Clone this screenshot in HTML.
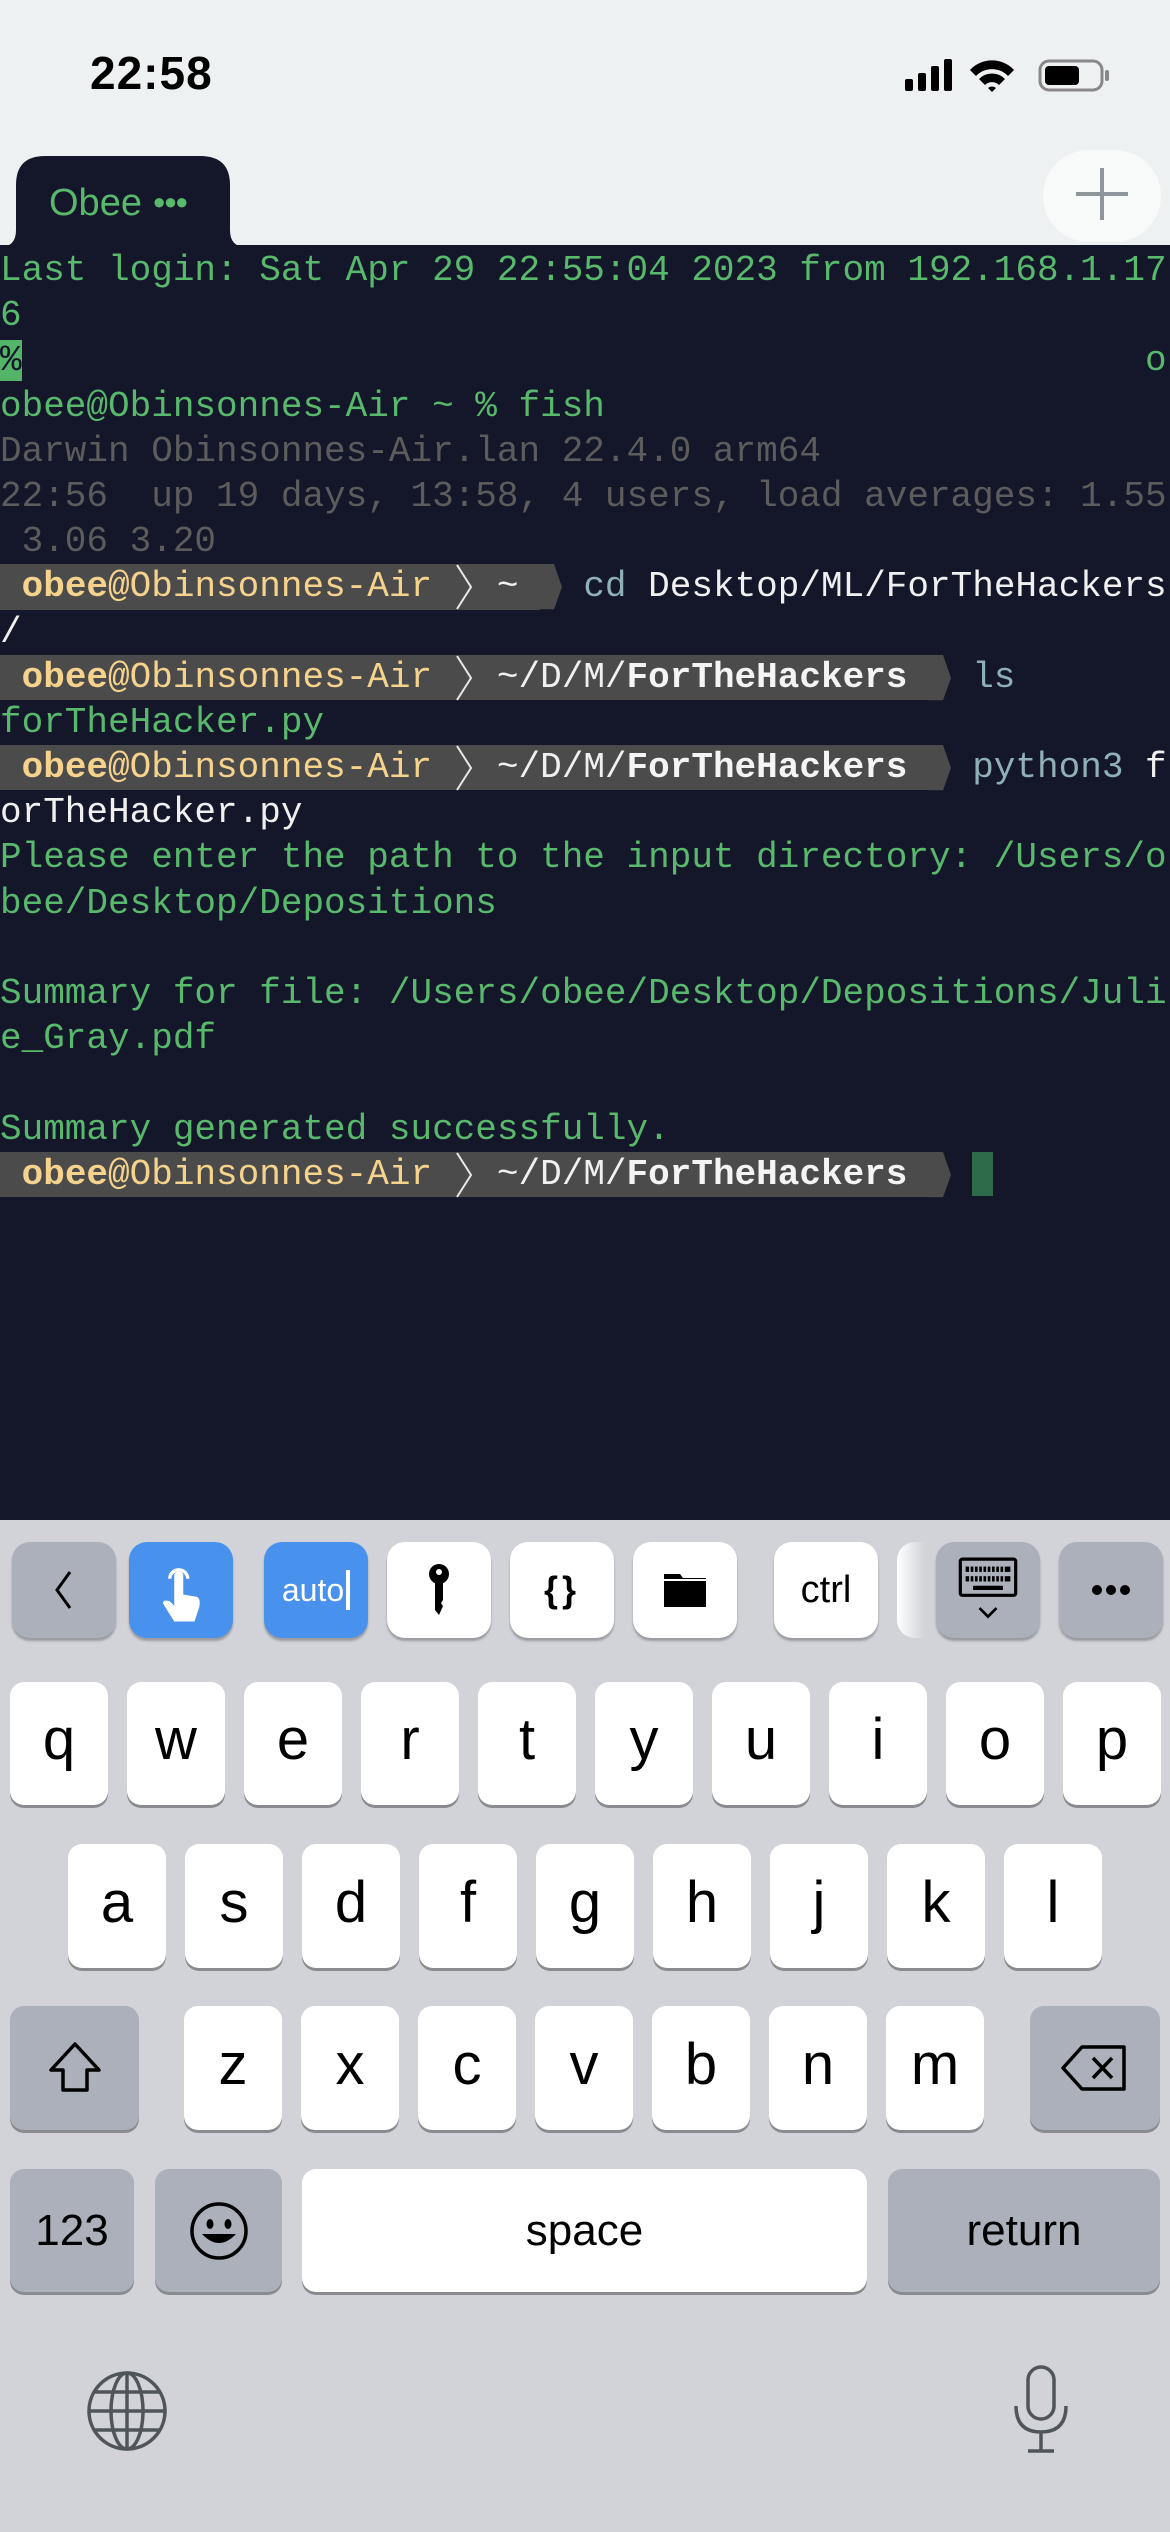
<!DOCTYPE html>
<html><head><meta charset="utf-8"><style>
*{margin:0;padding:0;box-sizing:border-box}
body{width:1170px;height:2532px;background:#d1d3d9;position:relative;overflow:hidden;font-family:"Liberation Sans",sans-serif}
.top{position:absolute;left:0;top:0;width:1170px;height:245px;background:#eef1f2}
.time{position:absolute;left:90px;top:46px;font-size:46px;font-weight:bold;color:#000;letter-spacing:1px}
.term{position:absolute;left:0;top:245px;width:1170px;height:1275px;background:#14162a;overflow:hidden}
.lines{position:absolute;left:0;top:3px;font-family:"Liberation Mono",monospace;font-size:36px;line-height:45.2px;color:#58b86b}
.l{height:45.2px;position:relative;white-space:pre}
.g{color:#5c5c5c}
.seg{background:#4b4b4b;display:inline-block;height:45.2px;vertical-align:top}
.y{color:#f6d38c}
.yb{color:#f6d38c;font-weight:bold}
.w{color:#f0f0f0}
.wb{color:#f4f4f4;font-weight:bold}
.t{color:#8fb0b6}
.ch{display:inline-block;width:21.6px;height:45.2px;vertical-align:top;position:relative}
.ch svg{position:absolute;left:0;top:0}
.key{position:absolute;background:#fff;border-radius:14px;box-shadow:0 3px 0 #8a8b8f;display:flex;align-items:center;justify-content:center;font-size:58px;color:#000;padding-bottom:8px}
.gk{background:#abb0ba}
.tb{position:absolute;top:1542px;height:96px;width:104px;border-radius:18px;background:#fff;box-shadow:0 3px 2px #9a9ba0;display:flex;align-items:center;justify-content:center}
.bl{background:#4891ec}
.gr{background:#abb0ba}
</style></head><body>
<div class="top"></div>
<div class="time">22:58</div>
<svg style="position:absolute;left:905px;top:55px" width="210" height="40" viewBox="0 0 210 40">
<rect x="0" y="24" width="8" height="12" rx="2" fill="#000"/><rect x="13" y="18" width="8" height="18" rx="2" fill="#000"/><rect x="26" y="11" width="8" height="25" rx="2" fill="#000"/><rect x="39" y="4" width="8" height="32" rx="2" fill="#000"/>
<path d="M65 15 A30 30 0 0 1 109 15 L103 21 A22 22 0 0 0 71 21 Z" fill="#000"/><path d="M74 24 A18 18 0 0 1 100 24 L94 30 A10 10 0 0 0 80 30 Z" fill="#000"/><path d="M83 33 L87 37 L91 33 A6 6 0 0 0 83 33Z" fill="#000"/>
<rect x="135" y="6" width="62" height="29" rx="9" fill="none" stroke="#888" stroke-width="3"/><rect x="140" y="11" width="34" height="19" rx="4" fill="#000"/><rect x="200" y="15" width="4" height="11" rx="2" fill="#888"/>
</svg>
<svg style="position:absolute;left:0;top:150px" width="250" height="97" viewBox="0 0 250 97">
<path d="M0 97 Q16 97 16 80 L16 35 Q16 6 45 6 L200 6 Q230 6 230 35 L230 80 Q230 97 246 97 Z" fill="#14162a"/>
</svg>
<div style="position:absolute;left:49px;top:182px;font-size:38px;color:#58b86b">Obee <span style="font-size:22px;letter-spacing:-2px;position:relative;top:-6px">●●●</span></div>
<div style="position:absolute;left:1043px;top:150px;width:118px;height:92px;border-radius:46px;background:#f8f9f9"></div>
<svg style="position:absolute;left:1074px;top:166px" width="56" height="56"><path d="M28 2V54M2 28H54" stroke="#8f969b" stroke-width="4"/></svg>

<div class="term"><div class="lines">
<div class="l">Last login: Sat Apr 29 22:55:04 2023 from 192.168.1.17</div>
<div class="l">6</div>
<div class="l"><span style="background:#54b468;color:#14162a">%</span>                                                    o</div>
<div class="l">obee@Obinsonnes-Air ~ % fish</div>
<div class="l g">Darwin Obinsonnes-Air.lan 22.4.0 arm64</div>
<div class="l g">22:56  up 19 days, 13:58, 4 users, load averages: 1.55</div>
<div class="l g"> 3.06 3.20</div>
<div class="l"><span class="seg"> <span class="yb">obee</span><span class="y">@Obinsonnes-Air</span> <span class="ch"><svg width="22" height="46"><path d="M3 1 L17 23 L3 45" stroke="#e8e8e8" stroke-width="2" fill="none"/></svg></span> <span class="w">~</span> </span><span class="ch"><svg width="22" height="46"><path d="M0 0 L14 0 L22 23 L14 45.2 L0 45.2Z" fill="#4b4b4b"/></svg></span> <span class="t">cd</span> <span class="w">Desktop/ML/ForTheHackers</span></div>
<div class="l w">/</div>
<div class="l"><span class="seg"> <span class="yb">obee</span><span class="y">@Obinsonnes-Air</span> <span class="ch"><svg width="22" height="46"><path d="M3 1 L17 23 L3 45" stroke="#e8e8e8" stroke-width="2" fill="none"/></svg></span> <span class="w">~/D/M/</span><span class="wb">ForTheHackers</span> </span><span class="ch"><svg width="22" height="46"><path d="M0 0 L14 0 L22 23 L14 45.2 L0 45.2Z" fill="#4b4b4b"/></svg></span> <span class="t">ls</span></div>
<div class="l">forTheHacker.py</div>
<div class="l"><span class="seg"> <span class="yb">obee</span><span class="y">@Obinsonnes-Air</span> <span class="ch"><svg width="22" height="46"><path d="M3 1 L17 23 L3 45" stroke="#e8e8e8" stroke-width="2" fill="none"/></svg></span> <span class="w">~/D/M/</span><span class="wb">ForTheHackers</span> </span><span class="ch"><svg width="22" height="46"><path d="M0 0 L14 0 L22 23 L14 45.2 L0 45.2Z" fill="#4b4b4b"/></svg></span> <span class="t">python3</span> <span class="w">f</span></div>
<div class="l w">orTheHacker.py</div>
<div class="l">Please enter the path to the input directory: /Users/o</div>
<div class="l">bee/Desktop/Depositions</div>
<div class="l"> </div>
<div class="l">Summary for file: /Users/obee/Desktop/Depositions/Juli</div>
<div class="l">e_Gray.pdf</div>
<div class="l"> </div>
<div class="l">Summary generated successfully.</div>
<div class="l"><span class="seg"> <span class="yb">obee</span><span class="y">@Obinsonnes-Air</span> <span class="ch"><svg width="22" height="46"><path d="M3 1 L17 23 L3 45" stroke="#e8e8e8" stroke-width="2" fill="none"/></svg></span> <span class="w">~/D/M/</span><span class="wb">ForTheHackers</span> </span><span class="ch"><svg width="22" height="46"><path d="M0 0 L14 0 L22 23 L14 45.2 L0 45.2Z" fill="#4b4b4b"/></svg></span> <span style="display:inline-block;width:21px;height:44px;background:#2e6b4b;vertical-align:top"></span></div>
</div></div>

<div class="tb gr" style="left:12px"><svg width="30" height="44"><path d="M21 4L8 22L21 40" stroke="#000" stroke-width="3" fill="none"/></svg></div>
<div class="tb bl" style="left:129px"><svg width="50" height="72" viewBox="0 0 44 64"><path d="M12 22 A8 8 0 1 1 28 22" stroke="#fff" stroke-width="3" fill="none"/><path d="M16 18 Q20 12 24 18 L24 36 L36 38 Q40 40 38 48 L34 60 L16 60 L6 44 Q6 40 12 42 L16 46Z" fill="#fff"/></svg></div>
<div class="tb bl" style="left:264px;color:#fff;font-size:32px">auto<span style="display:inline-block;width:4px;height:40px;background:#fff;margin-left:2px"></span></div>
<div class="tb" style="left:387px"><svg width="30" height="64" viewBox="0 0 30 60"><circle cx="15" cy="14" r="10" fill="#000"/><circle cx="15" cy="12" r="3" fill="#fff"/><path d="M11 22H19V40L17 43L19 46L15 55L11 50Z" fill="#000"/></svg></div>
<div class="tb" style="left:510px;font-size:36px;font-weight:bold;letter-spacing:4px">{}</div>
<div class="tb" style="left:633px"><svg width="44" height="36"><path d="M1 2H17L20 6H43V35H1Z" fill="#000"/><path d="M1 8H43" stroke="#fff" stroke-width="2"/></svg></div>
<div class="tb" style="left:774px;font-size:38px">ctrl</div>
<div class="tb" style="left:897px;width:28px;border-radius:18px 0 0 18px;background:linear-gradient(90deg,#fff,#d1d3d9);box-shadow:none"></div>
<div class="tb gr" style="left:936px"><svg width="60" height="66" viewBox="0 0 56 62"><rect x="2" y="2" width="52" height="34" rx="2" fill="none" stroke="#000" stroke-width="3"/><g fill="#000"><rect x="7" y="9" width="42" height="5"/><rect x="7" y="18" width="42" height="5"/><rect x="14" y="27" width="28" height="4"/></g><g stroke="#abb0ba" stroke-width="1.5"><path d="M11 8V24M15 8V24M19 8V24M23 8V24M27 8V24M31 8V24M35 8V24M39 8V24M43 8V24"/></g><path d="M20 48L28 56L36 48" stroke="#000" stroke-width="2.5" fill="none"/></svg></div>
<div class="tb gr" style="left:1059px"><svg width="40" height="12"><circle cx="6" cy="6" r="5"/><circle cx="20" cy="6" r="5"/><circle cx="34" cy="6" r="5"/></svg></div>

<div class="key" style="left:10px;top:1682px;width:98px;height:123px">q</div>
<div class="key" style="left:127px;top:1682px;width:98px;height:123px">w</div>
<div class="key" style="left:244px;top:1682px;width:98px;height:123px">e</div>
<div class="key" style="left:361px;top:1682px;width:98px;height:123px">r</div>
<div class="key" style="left:478px;top:1682px;width:98px;height:123px">t</div>
<div class="key" style="left:595px;top:1682px;width:98px;height:123px">y</div>
<div class="key" style="left:712px;top:1682px;width:98px;height:123px">u</div>
<div class="key" style="left:829px;top:1682px;width:98px;height:123px">i</div>
<div class="key" style="left:946px;top:1682px;width:98px;height:123px">o</div>
<div class="key" style="left:1063px;top:1682px;width:98px;height:123px">p</div>

<div class="key" style="left:68px;top:1844px;width:98px;height:124px">a</div>
<div class="key" style="left:185px;top:1844px;width:98px;height:124px">s</div>
<div class="key" style="left:302px;top:1844px;width:98px;height:124px">d</div>
<div class="key" style="left:419px;top:1844px;width:98px;height:124px">f</div>
<div class="key" style="left:536px;top:1844px;width:98px;height:124px">g</div>
<div class="key" style="left:653px;top:1844px;width:98px;height:124px">h</div>
<div class="key" style="left:770px;top:1844px;width:98px;height:124px">j</div>
<div class="key" style="left:887px;top:1844px;width:98px;height:124px">k</div>
<div class="key" style="left:1004px;top:1844px;width:98px;height:124px">l</div>

<div class="key gk" style="left:10px;top:2006px;width:129px;height:124px;padding:0"><svg width="60" height="56" viewBox="0 0 60 56"><path d="M30 4L6 30H18V50H42V30H54Z" fill="none" stroke="#000" stroke-width="3.5" stroke-linejoin="round"/></svg></div>
<div class="key" style="left:184px;top:2006px;width:98px;height:124px">z</div>
<div class="key" style="left:301px;top:2006px;width:98px;height:124px">x</div>
<div class="key" style="left:418px;top:2006px;width:98px;height:124px">c</div>
<div class="key" style="left:535px;top:2006px;width:98px;height:124px">v</div>
<div class="key" style="left:652px;top:2006px;width:98px;height:124px">b</div>
<div class="key" style="left:769px;top:2006px;width:98px;height:124px">n</div>
<div class="key" style="left:886px;top:2006px;width:98px;height:124px">m</div>
<div class="key gk" style="left:1030px;top:2006px;width:130px;height:124px;padding:0"><svg width="70" height="50" viewBox="0 0 70 50"><path d="M22 4H64V46H22L3 25Z" fill="none" stroke="#000" stroke-width="3.5" stroke-linejoin="round"/><path d="M33 15L52 35M52 15L33 35" stroke="#000" stroke-width="3.5"/></svg></div>

<div class="key gk" style="left:10px;top:2169px;width:124px;height:123px;font-size:44px;padding:0">123</div>
<div class="key gk" style="left:155px;top:2169px;width:127px;height:123px;padding:0"><svg width="62" height="62" viewBox="0 0 62 62"><circle cx="31" cy="31" r="27" fill="none" stroke="#000" stroke-width="3.5"/><ellipse cx="22" cy="24" rx="3.5" ry="5"/><ellipse cx="40" cy="24" rx="3.5" ry="5"/><path d="M14 34Q31 52 48 34Z" fill="#000"/></svg></div>
<div class="key" style="left:302px;top:2169px;width:565px;height:123px;font-size:44px;padding:0">space</div>
<div class="key gk" style="left:888px;top:2169px;width:272px;height:123px;font-size:44px;padding:0">return</div>

<svg style="position:absolute;left:86px;top:2370px" width="82" height="82" viewBox="0 0 82 82"><g fill="none" stroke="#50555c" stroke-width="3.5"><circle cx="41" cy="41" r="38"/><ellipse cx="41" cy="41" rx="16" ry="38"/><path d="M41 3V79M3 41H79M9 22H73M9 60H73"/></g></svg>
<svg style="position:absolute;left:1010px;top:2364px" width="62" height="92" viewBox="0 0 62 92"><g fill="none" stroke="#50555c" stroke-width="3.5"><rect x="18" y="3" width="26" height="52" rx="13"/><path d="M6 42Q6 68 31 68Q56 68 56 42M31 68V86M18 87H44"/></g></svg>
</body></html>
